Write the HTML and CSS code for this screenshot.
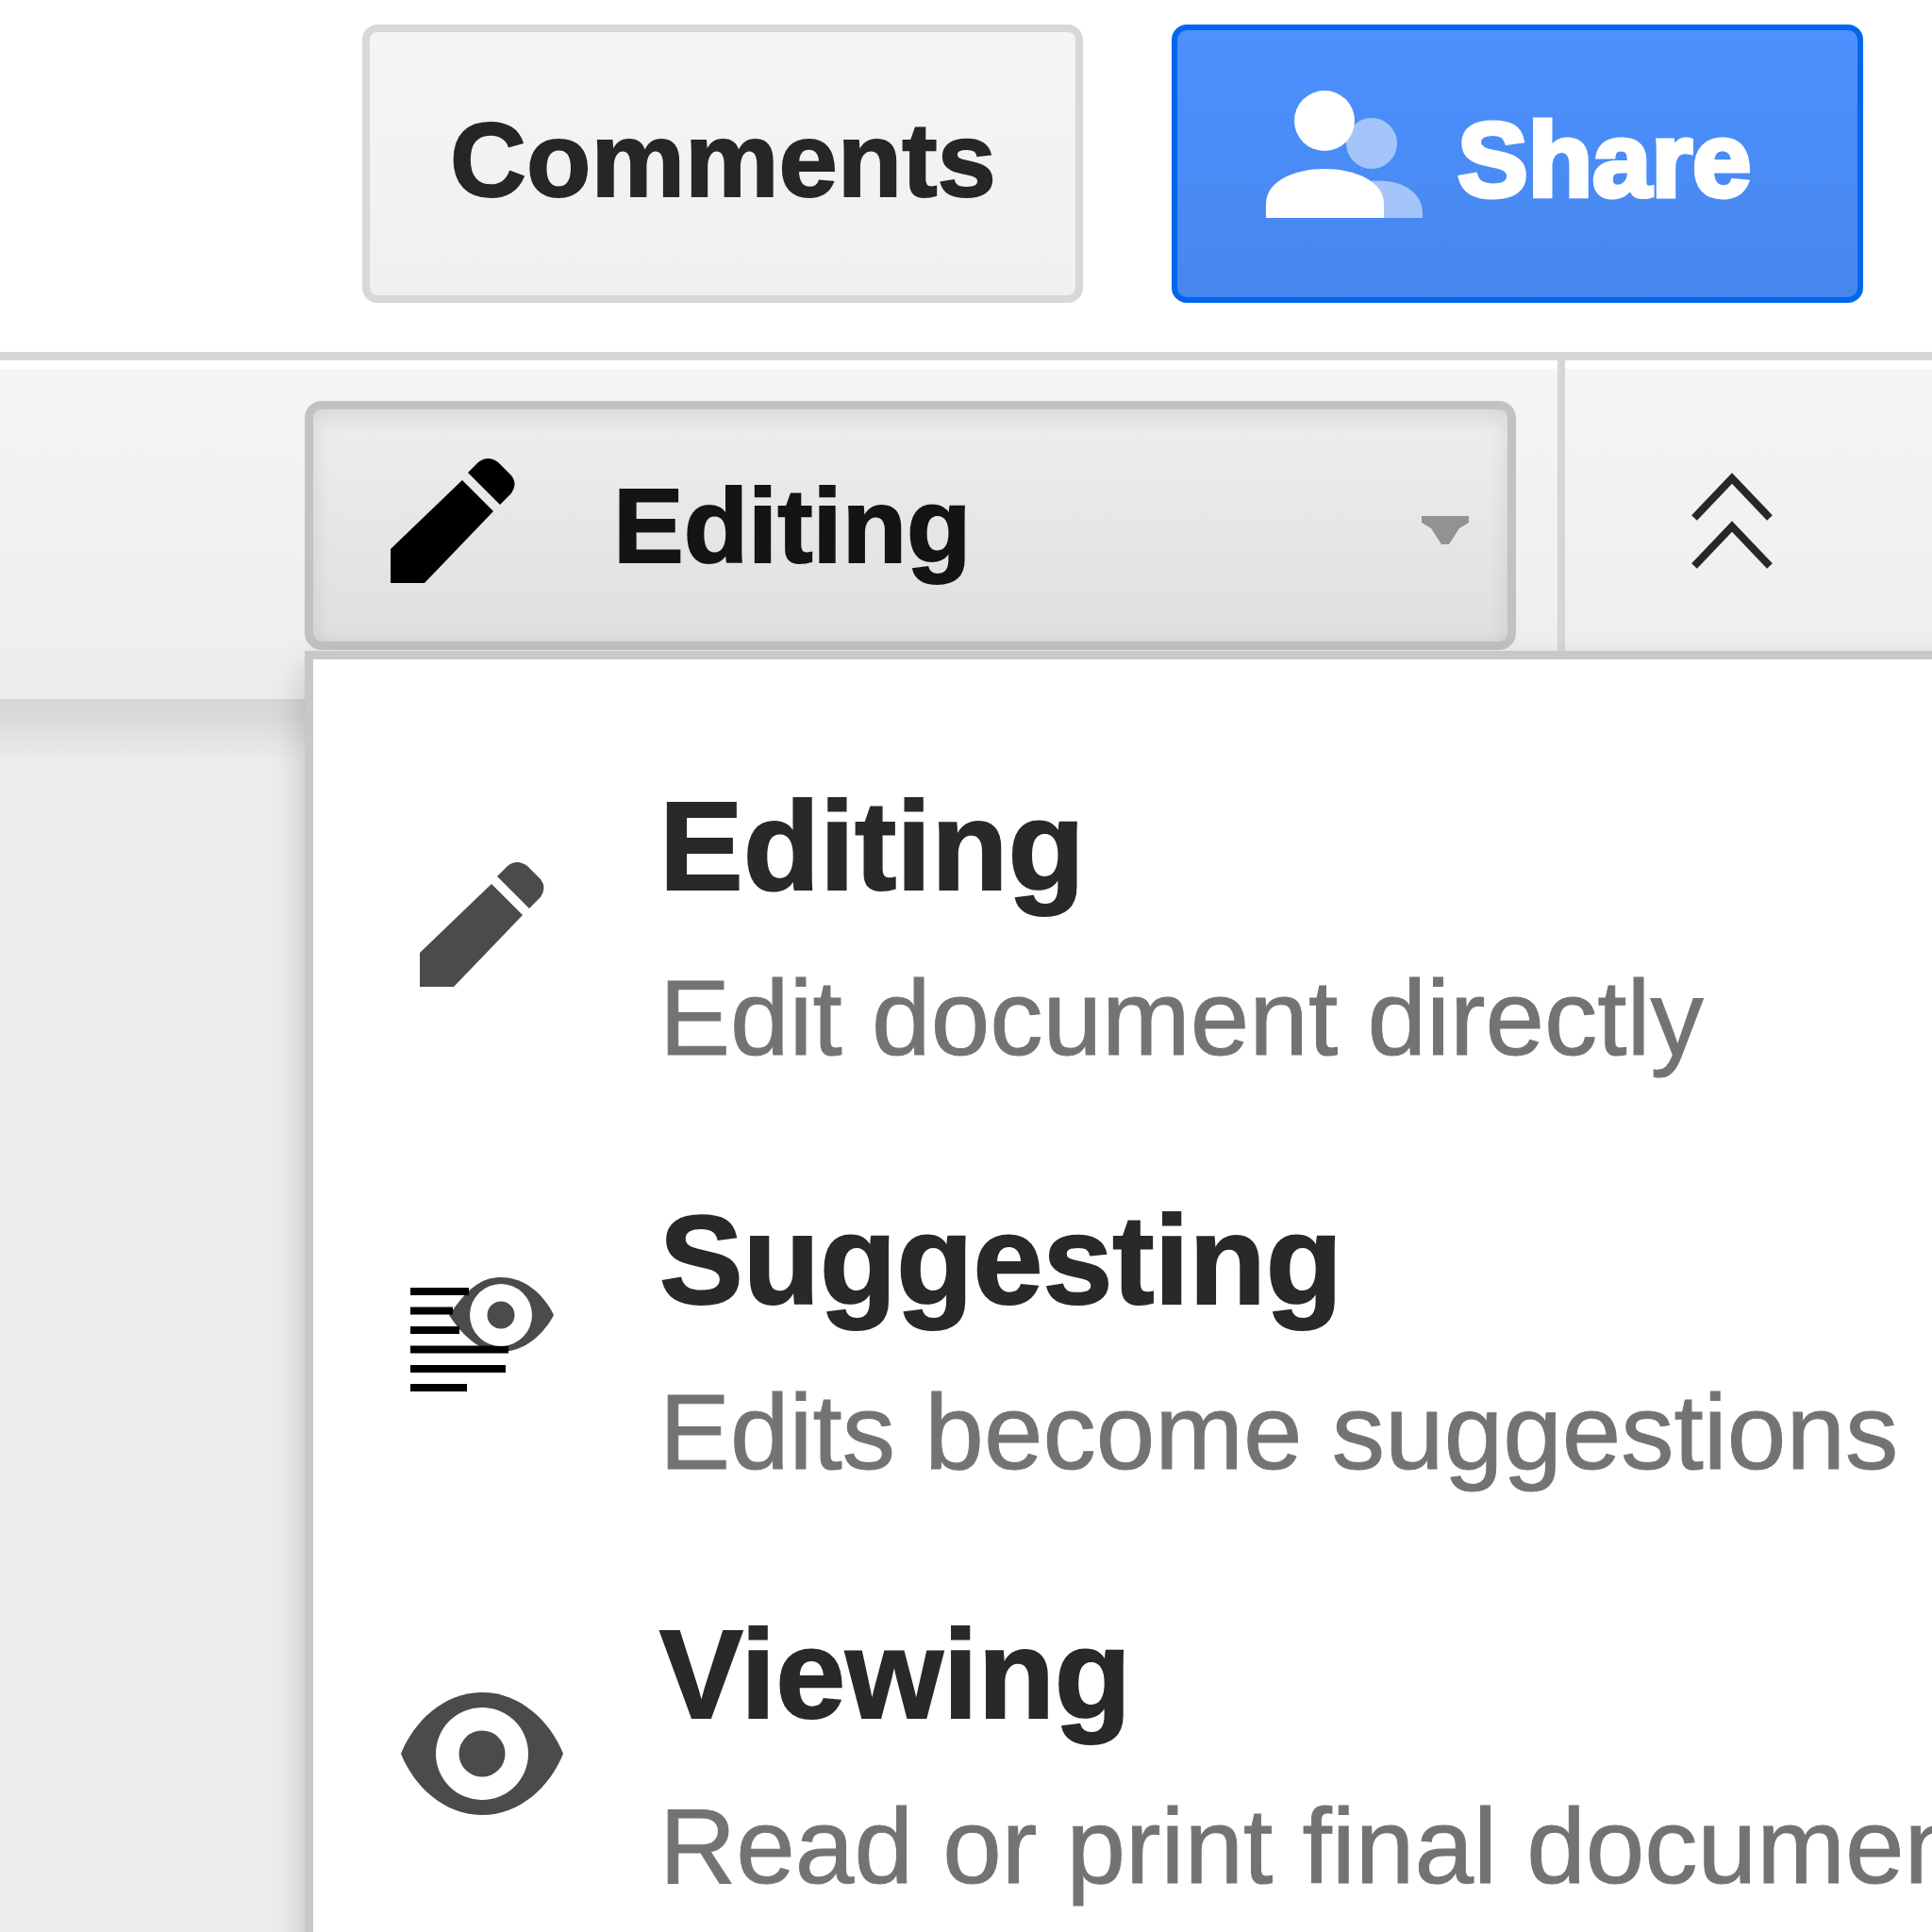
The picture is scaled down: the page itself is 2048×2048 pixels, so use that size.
FILE: index.html
```
<!DOCTYPE html>
<html lang="en">
<head>
    <meta charset="utf-8">
    <title>Document</title>
    <link rel="stylesheet" href="styles.css">
</head>
<body>

<svg class="defs" width="0" height="0">
    <symbol id="pencil" viewBox="0 0 132 132">
        <path d="M0 96L76 23L109 56L36 132H0Z"/>
        <path d="M82 15L93 4Q103 -4 114 4L128 18Q135 27 128 37L116 49Z"/>
    </symbol>
</svg>

<div class="header">
    <button class="button comments">Comments</button>
    <button class="button share">
        <svg class="people" viewBox="0 0 166 136">
            <g class="back">
                <circle cx="112" cy="56" r="27"/>
                <path d="M108 96C144 92 166 108 166 130V135H108Z"/>
            </g>
            <circle cx="62" cy="32" r="32"/>
            <path d="M0 135V120C0 96 30 83 62 83S125 96 125 120V135Z"/>
        </svg>
        <span class="share-text">Share</span>
    </button>
</div>

<div class="toolbar">
    <div class="mode">
        <button class="mode-button">
            <svg class="mode-pencil"><use href="#pencil"/></svg>
            <span class="mode-text">Editing</span>
            <svg class="arrow" viewBox="0 0 50 30"><path d="M0 0H50V7L40 13L29 30H21L10 13L0 7Z"/></svg>
        </button>
        <div class="menu">
            <div class="item">
                <div class="icon"><svg width="132" height="132"><use href="#pencil"/></svg></div>
                <div>
                    <div class="title">Editing</div>
                    <div class="description">Edit document directly</div>
                </div>
            </div>
            <div class="item">
                <div class="icon">
                    <svg width="152" height="122" viewBox="0 0 152 122">
                        <path d="M41 41C56 20 70 1 96 1C122 1 142 20 152 41C142 60 122 80 96 80C74 80 56 64 41 41Z"/>
                        <path class="lines" d="M0 16H62M0 36.500H45M0 57H52M0 77.500H104M0 98H101M0 118H60"/>
                        <circle class="white" cx="96" cy="41" r="33"/>
                        <circle cx="96" cy="41" r="14.500"/>
                    </svg>
                </div>
                <div>
                    <div class="title">Suggesting</div>
                    <div class="description">Edits become suggestions</div>
                </div>
            </div>
            <div class="item">
                <div class="icon">
                    <svg width="172" height="132" viewBox="0 0 172 132">
                        <path d="M0 67C14 32 46 2 86 2S158 32 172 67C158 102 126 132 86 132S14 102 0 67Z"/>
                        <circle class="white" cx="86" cy="67" r="49"/>
                        <circle cx="86" cy="67" r="24.500"/>
                    </svg>
                </div>
                <div>
                    <div class="title">Viewing</div>
                    <div class="description">Read or print final document</div>
                </div>
            </div>
        </div>
    </div>
    <div class="collapse">
        <svg width="88" height="104" viewBox="0 0 88 104"><path d="M3 48L43 6L83 48M3 99L43 57L83 99"/></svg>
    </div>
</div>
<div class="toolbar-shadow"></div>

</body>
</html>
```
FILE: styles.css
```
* {
    box-sizing: border-box;
}

body {
    margin: 0;
    width: 2048px;
    height: 2048px;
    overflow: hidden;
    background-color: #ededed;
    font-family: "Liberation Sans", Arial, sans-serif;
}

svg {
    display: block;
    flex: none;
    overflow: visible;
}

.defs {
    position: absolute;
}

.header {
    display: flex;
    justify-content: flex-end;
    gap: 94px;
    height: 382px;
    padding: 26px 73px 0 0;
    background-color: white;
    border-bottom: 9px solid #d5d5d5;
}

.button {
    display: flex;
    align-items: center;
    height: 295px;
    padding: 0;
    border-radius: 16px;
    font: bold 112px/130px "Liberation Sans", Arial, sans-serif;
}

.comments {
    width: 764px;
    justify-content: center;
    padding: 0 0 8px 1px;
    border: 8px solid #d8d8d8;
    color: #262626;
    background: linear-gradient(#f5f5f5, #f0f0f0);
    -webkit-text-stroke: 2px #262626;
}

.share {
    width: 733px;
    padding: 0 0 8px 94px;
    border: 6px solid #0266ee;
    color: white;
    background: linear-gradient(#4d90fe, #4787ed);
}

.people {
    width: 166px;
    height: 136px;
    margin-top: -11px;
    fill: white;
}

.back {
    fill: #a5c5fa;
}

.share-text {
    margin: 1px 0 0 37px;
    -webkit-text-stroke: 5px white;
}

.toolbar {
    display: flex;
    justify-content: flex-end;
    height: 359px;
    border-top: 9px solid white;
    background: linear-gradient(#f5f5f5, #ededed);
}

.toolbar-shadow {
    height: 68px;
    background: linear-gradient(#d6d6d6, #d9d9d9 25%, #e8e8e8 80%, #ededed);
}

.mode {
    position: relative;
    width: 1284px;
    margin: 34px 44px 0 0;
}

.mode-button {
    display: flex;
    align-items: center;
    width: 1284px;
    height: 264px;
    padding: 0 41px 0 82px;
    border: 9px solid #c2c2c2;
    border-radius: 18px;
    background: linear-gradient(#eeeeee, #dfdfdf);
    box-shadow: inset 0 8px 22px rgba(0, 0, 0, 0.1);
    font: bold 112px/130px "Liberation Sans", Arial, sans-serif;
    color: #141414;
}

.mode-pencil {
    width: 132px;
    height: 132px;
    margin-top: -11px;
    fill: black;
}

.mode-text {
    margin: 1px auto 0 104px;
    -webkit-text-stroke: 2px #141414;
}

.arrow {
    width: 50px;
    height: 30px;
    margin-top: 10px;
    fill: #929292;
}

/* wider than the window, runs off the right edge */
.menu {
    position: absolute;
    left: 0;
    top: 265px;
    width: 2000px;
    height: 1500px;
    padding-top: 60px;
    background-color: white;
    border: 9px solid #c8c8c8;
    box-shadow: 0 18px 36px rgba(0, 0, 0, 0.2);
}

.item {
    display: flex;
    height: 439px;
    padding-top: 61px;
    white-space: nowrap;
}

.icon {
    display: flex;
    flex: none;
    justify-content: center;
    width: 358px;
    margin-right: 9px;
    padding-top: 94px;
    fill: #4b4b4b;
}

.lines {
    fill: none;
    stroke: black;
    stroke-width: 8;
}

.white {
    fill: white;
}

.title {
    font-size: 133px;
    font-weight: bold;
    line-height: 155px;
    color: #292929;
    -webkit-text-stroke: 2px #292929;
}

.description {
    margin-top: 39px;
    font-size: 112.5px;
    line-height: 130px;
    color: #737373;
    -webkit-text-stroke: 1px #737373;
}

.collapse {
    width: 397px;
    margin-top: -9px;
    padding: 119px 0 0 134px;
    border-left: 8px solid #d6d6d6;
}

.collapse path {
    fill: none;
    stroke: #282828;
    stroke-width: 8;
}
```
